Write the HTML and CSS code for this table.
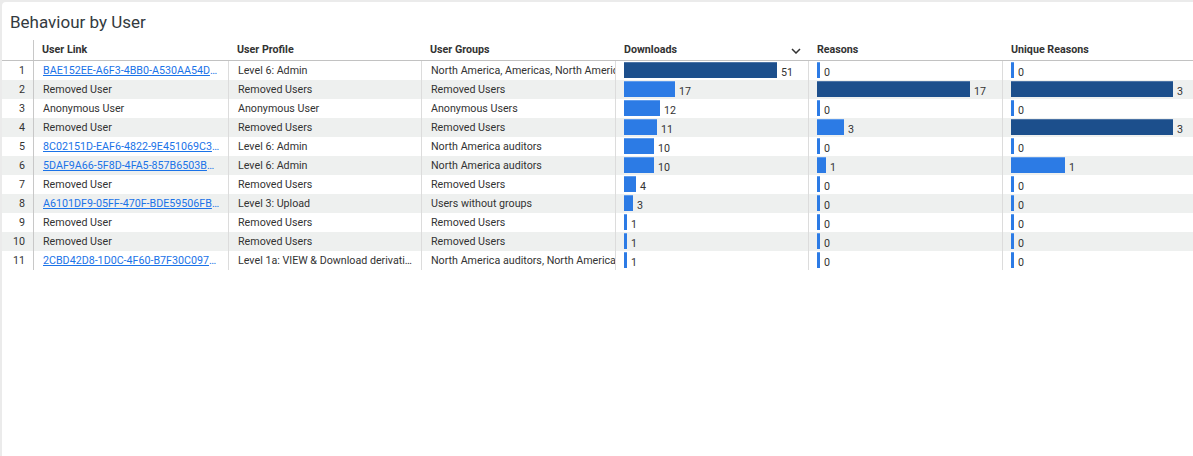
FILE: index.html
```html
<!DOCTYPE html>
<html>
<head>
<meta charset="utf-8">
<link rel="stylesheet" href="styles.css">
</head>
<body>
<div class="card">
  <h1 class="title">Behaviour by User</h1>
  <div class="table">
    <div class="row head">
      <div class="c num"></div>
      <div class="c first">User Link</div>
      <div class="c">User Profile</div>
      <div class="c">User Groups</div>
      <div class="c sort"><span>Downloads</span><svg class="chev" width="10" height="6" viewBox="0 0 10 6"><path d="M1 1l4 4 4-4" fill="none" stroke="#333" stroke-width="1.5"/></svg></div>
      <div class="c">Reasons</div>
      <div class="c">Unique Reasons</div>
    </div>

    <div class="row">
      <div class="c num">1</div>
      <div class="c"><a href="#">BAE152EE-A6F3-4BB0-A530AA54D7C1F2E0</a></div>
      <div class="c">Level 6: Admin</div>
      <div class="c clip">North America, Americas, North America auditors</div>
      <div class="c bar"><i class="max" style="width:153px"></i><b>51</b></div>
      <div class="c bar"><i style="width:3px"></i><b>0</b></div>
      <div class="c bar"><i style="width:3px"></i><b>0</b></div>
    </div>
    <div class="row alt">
      <div class="c num">2</div>
      <div class="c">Removed User</div>
      <div class="c">Removed Users</div>
      <div class="c clip">Removed Users</div>
      <div class="c bar"><i style="width:51px"></i><b>17</b></div>
      <div class="c bar"><i class="max" style="width:153px"></i><b>17</b></div>
      <div class="c bar"><i class="max" style="width:162px"></i><b>3</b></div>
    </div>
    <div class="row">
      <div class="c num">3</div>
      <div class="c">Anonymous User</div>
      <div class="c">Anonymous User</div>
      <div class="c clip">Anonymous Users</div>
      <div class="c bar"><i style="width:36px"></i><b>12</b></div>
      <div class="c bar"><i style="width:3px"></i><b>0</b></div>
      <div class="c bar"><i style="width:3px"></i><b>0</b></div>
    </div>
    <div class="row alt">
      <div class="c num">4</div>
      <div class="c">Removed User</div>
      <div class="c">Removed Users</div>
      <div class="c clip">Removed Users</div>
      <div class="c bar"><i style="width:33px"></i><b>11</b></div>
      <div class="c bar"><i style="width:27px"></i><b>3</b></div>
      <div class="c bar"><i class="max" style="width:162px"></i><b>3</b></div>
    </div>
    <div class="row">
      <div class="c num">5</div>
      <div class="c"><a href="#">8C02151D-EAF6-4822-9E451069C3A0B1D2</a></div>
      <div class="c">Level 6: Admin</div>
      <div class="c clip">North America auditors</div>
      <div class="c bar"><i style="width:30px"></i><b>10</b></div>
      <div class="c bar"><i style="width:3px"></i><b>0</b></div>
      <div class="c bar"><i style="width:3px"></i><b>0</b></div>
    </div>
    <div class="row alt">
      <div class="c num">6</div>
      <div class="c"><a href="#">5DAF9A66-5F8D-4FA5-857B6503B2C4E1F0</a></div>
      <div class="c">Level 6: Admin</div>
      <div class="c clip">North America auditors</div>
      <div class="c bar"><i style="width:30px"></i><b>10</b></div>
      <div class="c bar"><i style="width:9px"></i><b>1</b></div>
      <div class="c bar"><i style="width:54px"></i><b>1</b></div>
    </div>
    <div class="row">
      <div class="c num">7</div>
      <div class="c">Removed User</div>
      <div class="c">Removed Users</div>
      <div class="c clip">Removed Users</div>
      <div class="c bar"><i style="width:12px"></i><b>4</b></div>
      <div class="c bar"><i style="width:3px"></i><b>0</b></div>
      <div class="c bar"><i style="width:3px"></i><b>0</b></div>
    </div>
    <div class="row alt">
      <div class="c num">8</div>
      <div class="c"><a href="#">A6101DF9-05FF-470F-BDE59506FB3A2C10</a></div>
      <div class="c">Level 3: Upload</div>
      <div class="c clip">Users without groups</div>
      <div class="c bar"><i style="width:9px"></i><b>3</b></div>
      <div class="c bar"><i style="width:3px"></i><b>0</b></div>
      <div class="c bar"><i style="width:3px"></i><b>0</b></div>
    </div>
    <div class="row">
      <div class="c num">9</div>
      <div class="c">Removed User</div>
      <div class="c">Removed Users</div>
      <div class="c clip">Removed Users</div>
      <div class="c bar"><i style="width:3px"></i><b>1</b></div>
      <div class="c bar"><i style="width:3px"></i><b>0</b></div>
      <div class="c bar"><i style="width:3px"></i><b>0</b></div>
    </div>
    <div class="row alt">
      <div class="c num">10</div>
      <div class="c">Removed User</div>
      <div class="c">Removed Users</div>
      <div class="c clip">Removed Users</div>
      <div class="c bar"><i style="width:3px"></i><b>1</b></div>
      <div class="c bar"><i style="width:3px"></i><b>0</b></div>
      <div class="c bar"><i style="width:3px"></i><b>0</b></div>
    </div>
    <div class="row">
      <div class="c num">11</div>
      <div class="c"><a href="#">2CBD42D8-1D0C-4F60-B7F30C097A1B2C3D</a></div>
      <div class="c">Level 1a: VIEW &amp; Download derivatives</div>
      <div class="c clip">North America auditors, North America</div>
      <div class="c bar"><i style="width:3px"></i><b>1</b></div>
      <div class="c bar"><i style="width:3px"></i><b>0</b></div>
      <div class="c bar"><i style="width:3px"></i><b>0</b></div>
    </div>
  </div>
</div>
</body>
</html>
```

FILE: styles.css
```css
html, body {
  margin: 0;
  padding: 0;
  height: 100%;
  overflow: hidden;
  background: #ebebeb;
}
body {
  padding: 2px 0 0 2px;
  box-sizing: border-box;
  font-family: Roboto, "Liberation Sans", sans-serif;
  color: #333;
}
.card {
  background: #fff;
  border-top-left-radius: 4px;
  width: 1205px;
  height: 100%;
}
.title {
  margin: 0;
  padding: 10px 0 8px 8px;
  font-size: 17px;
  line-height: 20px;
  font-weight: 400;
  color: #333a40;
}
.table {
  display: flex;
  flex-direction: column;
}
.row {
  display: grid;
  grid-template-columns: 31px 195px 193px 194px 193px 194px 205px;
  height: 19px;
  font-size: 10.7px;
  line-height: 19px;
}
.row.alt {
  background: #eef0ef;
}
.c {
  box-sizing: border-box;
  padding: 0 8px 0 9px;
  border-left: 1px solid #dcdcdc;
  white-space: nowrap;
  overflow: hidden;
  text-overflow: ellipsis;
  min-width: 0;
}
.c.clip {
  text-overflow: clip;
  padding-right: 0;
}
.c.num {
  border-left: none;
  text-align: right;
  padding: 0 8px 0 0;
}
.row:not(.head) .c.num + .c {
  border-left-color: #c8c8c8;
}
.head {
  height: 20px;
  line-height: 20px;
  font-weight: 700;
  border-bottom: 1px solid #c2c2c2;
  color: #333;
}
.head .c {
  border-left-color: transparent;
  position: relative;
  padding-left: 8px;
}
.head .c.first {
  border-left: 1px solid #c8c8c8;
}
.head .c.num {
  border-left: none;
}
.head .c:not(.first):not(.num)::before {
  content: "";
  position: absolute;
  left: -1px;
  top: 6px;
  height: 9px;
  border-left: 1px solid #d6d6d6;
}
.head .sort {
  display: flex;
  align-items: center;
  justify-content: space-between;
  padding-right: 7px;
}
.chev {
  display: block;
  margin-top: 1px;
}
a {
  display: block;
  overflow: hidden;
  text-overflow: ellipsis;
  white-space: nowrap;
  color: #1a73e8;
  text-decoration: underline;
}
.c.bar {
  display: flex;
  align-items: flex-start;
  text-overflow: clip;
  padding-left: 8px;
}
.c.bar i {
  display: block;
  flex: none;
  height: 16px;
  margin-top: 1px;
  background: #2c7be5;
  border-top: 1px solid #5e9bec;
  box-sizing: border-box;
}
.c.bar i.max {
  background: #1c4f8c;
  border-top-color: #4c74a6;
}
.c.bar b {
  font-weight: 400;
  padding: 2px 0 0 4px;
  line-height: 19px;
}
```
